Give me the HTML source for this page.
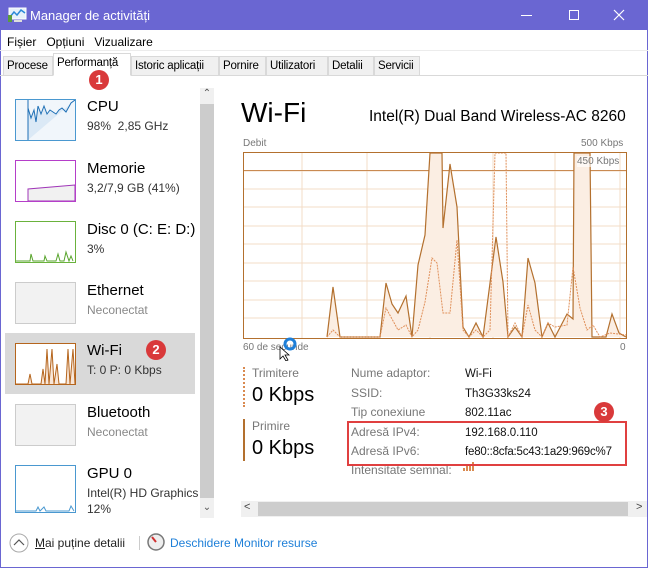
<!DOCTYPE html>
<html><head><meta charset="utf-8"><style>
*{margin:0;padding:0;box-sizing:border-box}
body{width:648px;height:568px;overflow:hidden;background:#fff;font-family:"Liberation Sans",sans-serif;color:#000;position:relative}
.a{position:absolute;white-space:nowrap}
.frame{position:absolute;left:0;top:0;width:648px;height:568px;border:1px solid #6a66d2;border-top:none}
.tb{position:absolute;left:0;top:0;width:648px;height:30px;background:#6a66d2;color:#fff}
.tab{position:absolute;top:56px;height:20px;border:1px solid #d9d9d9;background:#f0f0f0;font-size:11.5px;letter-spacing:-0.2px;padding:3px 3px 0;overflow:hidden}
.thumb{position:absolute;left:15px;width:61px;height:42px;border:1px solid}
.n{font-size:15px}
.s{font-size:12px;color:#333}
.g{color:#888}
.badge{position:absolute;width:20px;height:20px;border-radius:50%;background:#d9393a;color:#fff;font-size:13px;text-align:center;line-height:20px;font-weight:bold}
.lbl{font-size:12px;color:#777}
.val{font-size:11.5px;color:#111;padding-top:2px}
</style></head><body>
<div class="tb">
<svg class="a" style="left:8px;top:7px" width="20" height="16"><rect x="1" y="1" width="17" height="11" fill="#e6f0fa" stroke="#fff"/><polyline points="2,10 6,5 9,8 13,3 17,6" fill="none" stroke="#2b88d8" stroke-width="1.5"/><rect x="6" y="13" width="8" height="2" fill="#ddd"/><rect x="0" y="8" width="4" height="7" fill="#5a9c3e"/></svg>
<div class="a" style="left:30px;top:8px;font-size:13px">Manager de activități</div>
<div class="a" style="left:521px;top:15px;width:11px;height:1px;background:#fff"></div>
<div class="a" style="left:569px;top:10px;width:10px;height:10px;border:1px solid #fff"></div>
<svg class="a" style="left:613px;top:9px" width="12" height="12"><path d="M1 1L11 11M11 1L1 11" stroke="#fff" stroke-width="1.2"/></svg>
</div>
<div class="frame"></div>
<div class="a" style="left:7px;top:35px;font-size:12px">Fișier&nbsp;&nbsp; Opțiuni&nbsp;&nbsp; Vizualizare</div>
<div class="a" style="left:0;top:50px;width:648px;height:1px;background:#ececec"></div>
<div class="a" style="left:0;top:75px;width:648px;height:1px;background:#d9d9d9"></div>
<div class="tab" style="left:3px;width:50px">Procese</div>
<div class="tab" style="left:53px;top:53px;height:23px;width:78px;background:#fff;border-bottom-color:#fff">Performanță</div>
<div class="tab" style="left:131px;width:88px">Istoric aplicații</div>
<div class="tab" style="left:219px;width:47px">Pornire</div>
<div class="tab" style="left:266px;width:62px">Utilizatori</div>
<div class="tab" style="left:328px;width:46px">Detalii</div>
<div class="tab" style="left:374px;width:46px">Servicii</div>
<div class="badge" style="left:89px;top:70px">1</div>

<div class="a" style="left:200px;top:88px;width:14px;height:430px;background:#ccc"></div>
<div class="a" style="left:200px;top:88px;width:14px;height:16px;background:#f0f0f0;font-size:10px;text-align:center;color:#555">⌃</div>
<div class="a" style="left:200px;top:498px;width:14px;height:20px;background:#f0f0f0;font-size:10px;text-align:center;color:#555;line-height:20px">⌄</div>

<div class="thumb" style="top:99px;border-color:#4a98d0;background:#f1f6fb">
<svg width="59" height="40"><polyline points="12,40 12,8 15,18 18,10 20,22 22,6 25,14 28,6 31,14 34,10 37,12 40,14 43,10 46,8 50,12 55,3 59,0" fill="#dbe9f6" stroke="#1e6fb5" stroke-width="1"/><line x1="12" y1="0" x2="12" y2="40" stroke="#1e6fb5"/></svg></div>
<div class="a n" style="left:87px;top:98px">CPU</div>
<div class="a s" style="left:87px;top:119px">98%&nbsp; 2,85 GHz</div>

<div class="thumb" style="top:160px;border-color:#b53ec9"><svg width="59" height="40"><polygon points="12,40 12,28 59,24 59,40" fill="#f1f1f1" stroke="#a036b8"/></svg></div>
<div class="a n" style="left:87px;top:160px">Memorie</div>
<div class="a s" style="left:87px;top:181px">3,2/7,9 GB (41%)</div>

<div class="thumb" style="top:221px;border-color:#6ab23c"><svg width="59" height="40"><polyline points="0,39 14,39 15,32 17,39 28,39 29,34 31,39 40,39 42,32 44,39 48,39 50,30 53,39 55,34 57,39" fill="none" stroke="#5aa52e"/></svg></div>
<div class="a n" style="left:87px;top:221px">Disc 0 (C: E: D:)</div>
<div class="a s" style="left:87px;top:242px">3%</div>

<div class="thumb" style="top:282px;border-color:#ccc;background:#f2f2f2"></div>
<div class="a n" style="left:87px;top:282px">Ethernet</div>
<div class="a s g" style="left:87px;top:303px">Neconectat</div>

<div class="a" style="left:5px;top:333px;width:190px;height:61px;background:#d9d9d9"></div>
<div class="thumb" style="top:343px;border-color:#b5651d;background:#fff"><svg width="59" height="40"><polyline points="0,40 12,40 14,30 16,40 25,40 27,25 29,40 31,5 33,40 36,5 38,40 41,20 43,40 50,40 52,5 54,40 57,5 59,40" fill="#f8e6d8" stroke="#b5651d"/></svg></div>
<div class="a n" style="left:87px;top:342px">Wi-Fi</div>
<div class="a s" style="left:87px;top:363px">T: 0 P: 0 Kbps</div>
<div class="badge" style="left:146px;top:340px">2</div>

<div class="thumb" style="top:404px;border-color:#ccc;background:#f2f2f2"></div>
<div class="a n" style="left:87px;top:404px">Bluetooth</div>
<div class="a s g" style="left:87px;top:425px">Neconectat</div>

<div class="thumb" style="top:465px;border-color:#4a98d0;height:48px"><svg width="59" height="46"><polyline points="0,45 20,45 22,41 24,45 28,41 30,45 53,45 55,40 58,45" fill="none" stroke="#4a98d0"/></svg></div>
<div class="a n" style="left:87px;top:465px">GPU 0</div>
<div class="a s" style="left:87px;top:486px">Intel(R) HD Graphics</div>
<div class="a s" style="left:87px;top:502px">12%</div>

<div class="a" style="left:241px;top:97px;font-size:28px">Wi-Fi</div>
<div class="a" style="left:369px;top:108px;font-size:15.5px">Intel(R) Dual Band Wireless-AC 8260</div>
<div class="a lbl" style="left:243px;top:138px;font-size:10px">Debit</div>
<div class="a lbl" style="left:581px;top:138px;font-size:10px">500 Kbps</div>
<svg class="a" style="left:243px;top:152px" width="384" height="187">
<g stroke="#f3dcc7" stroke-width="1">
<line x1="0" y1="19" x2="384" y2="19"/><line x1="0" y1="37" x2="384" y2="37"/><line x1="0" y1="55" x2="384" y2="55"/><line x1="0" y1="74" x2="384" y2="74"/><line x1="0" y1="92" x2="384" y2="92"/><line x1="0" y1="111" x2="384" y2="111"/><line x1="0" y1="129" x2="384" y2="129"/><line x1="0" y1="148" x2="384" y2="148"/><line x1="0" y1="166" x2="384" y2="166"/>
<line x1="59" y1="0" x2="59" y2="187"/><line x1="124" y1="0" x2="124" y2="187"/><line x1="187" y1="0" x2="187" y2="187"/><line x1="250" y1="0" x2="250" y2="187"/><line x1="312" y1="0" x2="312" y2="187"/><line x1="377" y1="0" x2="377" y2="187"/>
</g>
<line x1="0" y1="18.5" x2="384" y2="18.5" stroke="#c98a52"/>
<g transform="translate(-243,-152)">
<polyline points="327,337 333,287 340,337 380,337 386,283 392,304 398,313 406,296 412,337 418,265 425,235 430,153 442,153 443,228 450,164 457,207 463,327 469,337 476,323 483,337 496,237 503,282 508,337 515,327 522,337 528,258 535,283 542,337 548,323 555,337 567,314 573,319 574,153 590,153 592,337 606,337 612,314 619,333 626,337" fill="#fbeee3" stroke="#b3702e" stroke-width="1.2"/>
<polyline points="327,337 333,330 340,337 380,337 386,308 398,330 406,325 412,337 418,330 425,302 432,258 437,263 443,313 450,313 457,240 463,330 469,337 476,330 483,337 490,330 495,153 506,153 508,337 515,323 522,337 528,305 535,330 542,337 548,323 555,327 567,325 573,267 580,308 587,330 593,325 600,337 610,333 626,335" fill="none" stroke="#e0905a" stroke-width="1" stroke-dasharray="2,1"/>
</g>
<rect x="0.5" y="0.5" width="383" height="186" fill="none" stroke="#b3702e"/>
</svg>
<div class="a lbl" style="left:577px;top:156px;font-size:10px;background:rgba(255,255,255,.6)">450 Kbps</div>
<div class="a lbl" style="left:243px;top:342px;font-size:10px">60 de secunde</div>
<div class="a lbl" style="left:620px;top:342px;font-size:10px">0</div>
<svg class="a" style="left:278px;top:337px" width="20" height="24"><circle cx="12" cy="7" r="5" fill="none" stroke="#1e7fd8" stroke-width="3"/><path d="M2 10 L2 22 L5 19 L8 24 L10 23 L7 18 L11 18 Z" fill="#fff" stroke="#000" stroke-width=".8"/></svg>

<div class="a" style="left:243px;top:367px;width:2px;height:40px;border-left:2px dotted #d98a50"></div>
<div class="a lbl" style="left:252px;top:366px">Trimitere</div>
<div class="a" style="left:252px;top:384px;font-size:20px">0 Kbps</div>
<div class="a" style="left:243px;top:419px;width:2px;height:42px;background:#b3702e"></div>
<div class="a lbl" style="left:252px;top:419px">Primire</div>
<div class="a" style="left:252px;top:437px;font-size:20px">0 Kbps</div>

<div class="a lbl" style="left:351px;top:366px">Nume adaptor:</div><div class="a val" style="left:465px;top:366px">Wi-Fi</div>
<div class="a lbl" style="left:351px;top:386px">SSID:</div><div class="a val" style="left:465px;top:386px">Th3G33ks24</div>
<div class="a lbl" style="left:351px;top:405px">Tip conexiune</div><div class="a val" style="left:465px;top:405px">802.11ac</div>
<div class="a lbl" style="left:351px;top:425px">Adresă IPv4:</div><div class="a val" style="left:465px;top:425px">192.168.0.110</div>
<div class="a lbl" style="left:351px;top:444px">Adresă IPv6:</div><div class="a val" style="left:465px;top:444px;letter-spacing:-0.2px">fe80::8cfa:5c43:1a29:969c%7</div>
<div class="a lbl" style="left:351px;top:463px">Intensitate semnal:</div>
<svg class="a" style="left:463px;top:461px" width="14" height="10"><rect x="0" y="7" width="2" height="3" fill="#d98a50"/><rect x="3" y="5" width="2" height="5" fill="#d98a50"/><rect x="6" y="3" width="2" height="7" fill="#d98a50"/><rect x="9" y="1" width="2" height="9" fill="#d98a50"/></svg>
<div class="a" style="left:347px;top:421px;width:280px;height:45px;border:2px solid #e04040"></div>
<div class="badge" style="left:594px;top:402px">3</div>

<div class="a" style="left:241px;top:501px;width:406px;height:16px;background:#f0f0f0"></div>
<div class="a" style="left:258px;top:502px;width:370px;height:14px;background:#cdcdcd"></div>
<div class="a" style="left:244px;top:501px;font-size:11px;color:#444">&lt;</div>
<div class="a" style="left:636px;top:501px;font-size:11px;color:#444">&gt;</div>

<svg class="a" style="left:9px;top:533px" width="20" height="20"><circle cx="10" cy="10" r="9" fill="none" stroke="#aaa"/><path d="M5 12 L10 7 L15 12" fill="none" stroke="#555" stroke-width="1.2"/></svg>
<div class="a" style="left:35px;top:536px;font-size:12px;color:#222"><u>M</u>ai puține detalii</div>
<div class="a" style="left:139px;top:536px;width:1px;height:14px;background:#ccc"></div>
<svg class="a" style="left:147px;top:533px" width="18" height="18"><circle cx="9" cy="9" r="8" fill="#eee" stroke="#777" stroke-width="1.5"/><path d="M9 9L5 4" stroke="#d03030" stroke-width="2"/></svg>
<div class="a" style="left:170px;top:536px;font-size:12px;color:#1e7fd8">Deschidere Monitor resurse</div>
</body></html>
